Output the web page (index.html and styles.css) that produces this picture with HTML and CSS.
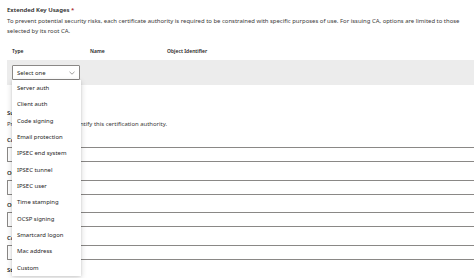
FILE: index.html
```html
<!DOCTYPE html>
<html lang="en">

<head>
    <meta charset="UTF-8">
    <title>Extended Key Usages</title>
    <link rel="stylesheet" href="styles.css">
</head>

<body>

    <div class="page">
        <h2 class="title">Extended Key Usages <span class="req">*</span></h2>
        <p class="desc">To prevent potential security risks, each certificate authority is required to be constrained with specific purposes of use. For issuing CA, options are limited to those selected by its root CA.</p>

        <div class="grid-head">
            <div>Type</div>
            <div>Name</div>
            <div>Object Identifier</div>
        </div>

        <div class="grid-row">
            <div class="select-wrap">
                <div class="select">
                    <span>Select one</span>
                    <svg width="6" height="4" viewBox="0 0 6 4"><path d="M0.5 0.8 L3 3.2 L5.5 0.8" fill="none" stroke="#605e5c" stroke-width="0.6"/></svg>
                </div>
                <ul class="menu">
                    <li>Server auth</li>
                    <li>Client auth</li>
                    <li>Code signing</li>
                    <li>Email protection</li>
                    <li>IPSEC end system</li>
                    <li>IPSEC tunnel</li>
                    <li>IPSEC user</li>
                    <li>Time stamping</li>
                    <li>OCSP signing</li>
                    <li>Smartcard logon</li>
                    <li>Mac address</li>
                    <li>Custom</li>
                </ul>
            </div>
        </div>

        <h3 class="section-title">Subject name</h3>
        <p class="desc">Provide information to identify this certification authority.</p>

        <div class="field">
            <label>Common name <span class="req">*</span></label>
            <div class="input"></div>
        </div>
        <div class="field">
            <label>Organization</label>
            <div class="input"></div>
        </div>
        <div class="field">
            <label>Organizational unit</label>
            <div class="input"></div>
        </div>
        <div class="field">
            <label>Country code</label>
            <div class="input"></div>
        </div>
        <div class="field">
            <label>State or province</label>
        </div>
    </div>

</body>

</html>
```

FILE: styles.css
```css
body {
    margin: 0;
    font-family: 'Noto Sans', 'Open Sans', sans-serif;
    color: #252423;
    background: #fff;
    overflow: hidden;
}

.page {
    padding: 5px 0 0 7px;
    font-size: 5.95px;
}

.title {
    font-size: 6px;
    font-weight: 600;
    margin: 0;
    line-height: 10px;
}

.req {
    color: #a4262c;
}

.desc {
    margin: 1px 0 0;
    line-height: 10px;
    color: #3b3a39;
    padding-right: 8px;
}

.grid-head {
    display: grid;
    grid-template-columns: 78px 77px 1fr;
    padding: 12px 0 0 5px;
    height: 24px;
    box-sizing: border-box;
    font-size: 5px;
    font-weight: 600;
}

.grid-row {
    background: #ececec;
    height: 25px;
    padding: 5px 0 0 5px;
    box-sizing: border-box;
    position: relative;
    z-index: 2;
}

.select-wrap {
    position: relative;
    width: 68px;
}

.select {
    height: 15px;
    border: 1px solid #8a8886;
    border-radius: 1px;
    background: #fff;
    box-sizing: border-box;
    display: flex;
    align-items: center;
    justify-content: space-between;
    padding: 0 4px 0 4px;
}

.menu {
    position: absolute;
    top: 15px;
    left: 0;
    width: 69px;
    margin: 0;
    padding: 0;
    list-style: none;
    background: #fff;
    box-shadow: 0 2px 6px rgba(0, 0, 0, 0.18), 0 0 2px rgba(0, 0, 0, 0.1);
}

.menu li {
    height: 16.35px;
    line-height: 16.35px;
    padding-left: 5px;
}

.section-title {
    font-size: 6px;
    font-weight: 600;
    margin: 23px 0 0;
    line-height: 10px;
}

.desc + .field {
    margin-top: 6px;
}

.field {
    height: 32.5px;
}

.field label {
    display: block;
    font-weight: 600;
    line-height: 10px;
}

.input {
    margin-top: 2px;
    height: 15px;
    border: 1px solid #8a8886;
    border-right: none;
    border-radius: 1px 0 0 1px;
    box-sizing: border-box;
}
```
